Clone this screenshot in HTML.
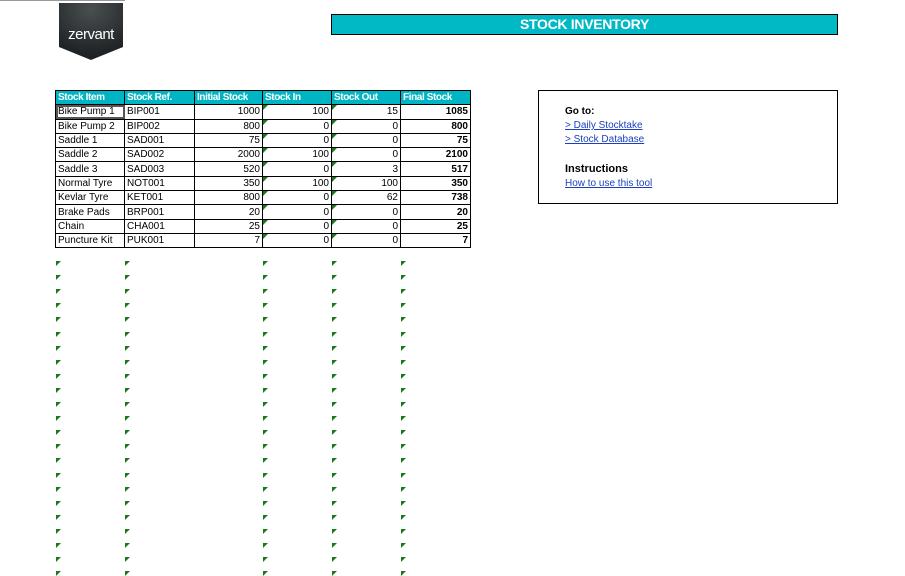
<!DOCTYPE html>
<html><head><style>
body{margin:0;width:905px;height:574px;background:#fff;position:relative;overflow:hidden;font-family:"Liberation Sans",sans-serif;}
.a{position:absolute}
table{position:absolute;left:55px;top:90px;border-collapse:collapse;font-size:10px;table-layout:fixed;width:415px}
td,th{border:1px solid #000;height:13.3px;padding:0 2px;line-height:13px;white-space:nowrap;position:relative;overflow:hidden}
th{background:#00b5c3;color:#fff;text-align:left;font-weight:bold;font-size:10px;letter-spacing:-0.4px}
td.n{text-align:right}
td.b{font-weight:bold}
.t{position:absolute;width:0;height:0;border-top:5px solid #1a7a1a;border-right:5px solid transparent}
td .t{left:0;top:0}
a{color:#1a3fc0;text-decoration:underline}
</style></head><body>
<div class="a" style="left:0;top:0;width:125px;height:1px;background:#999"></div>
<svg class="a" style="left:59px;top:3px" width="65" height="58"><defs><radialGradient id="g" cx="0.5" cy="0.1" r="0.8"><stop offset="0" stop-color="#4a4f52"/><stop offset="1" stop-color="#1f2325"/></radialGradient></defs><path d="M0 0H64V44L32 57L0 44Z" fill="url(#g)"/><text x="32" y="36" fill="#fff" font-size="15" text-anchor="middle" font-family="Liberation Sans" letter-spacing="-0.5">zervant</text></svg>
<div class="a" style="left:331px;top:14px;width:505px;height:19px;background:#00b9c4;border:1px solid #000;color:#fff;font-weight:bold;font-size:14px;text-align:center;line-height:19px;letter-spacing:-0.3px">STOCK INVENTORY</div>
<div class="a" style="left:538px;top:90px;width:298px;height:112px;border:1px solid #000;font-size:10px;line-height:14px">
<div style="position:absolute;left:26px;top:14px"><b>Go to:</b><br><a>&gt; Daily Stocktake</a><br><a>&gt; Stock Database</a><div style="height:15px"></div><b style="font-size:11px">Instructions</b><br><a>How to use this tool</a></div>
</div>
<table>
<colgroup><col style="width:69px"><col style="width:70px"><col style="width:68px"><col style="width:69px"><col style="width:69px"><col style="width:70px"></colgroup>
<tr><th>Stock Item</th><th>Stock Ref.</th><th>Initial Stock</th><th>Stock In</th><th>Stock Out</th><th>Final Stock</th></tr>
<tr><td style="outline:2px solid #555;outline-offset:-2px">Bike Pump 1</td><td>BIP001</td><td class="n">1000</td><td class="n"><i class="t"></i>100</td><td class="n"><i class="t"></i>15</td><td class="n b">1085</td></tr>
<tr><td>Bike Pump 2</td><td>BIP002</td><td class="n">800</td><td class="n"><i class="t"></i>0</td><td class="n"><i class="t"></i>0</td><td class="n b">800</td></tr>
<tr><td>Saddle 1</td><td>SAD001</td><td class="n">75</td><td class="n"><i class="t"></i>0</td><td class="n"><i class="t"></i>0</td><td class="n b">75</td></tr>
<tr><td>Saddle 2</td><td>SAD002</td><td class="n">2000</td><td class="n"><i class="t"></i>100</td><td class="n"><i class="t"></i>0</td><td class="n b">2100</td></tr>
<tr><td>Saddle 3</td><td>SAD003</td><td class="n">520</td><td class="n"><i class="t"></i>0</td><td class="n"><i class="t"></i>3</td><td class="n b">517</td></tr>
<tr><td>Normal Tyre</td><td>NOT001</td><td class="n">350</td><td class="n"><i class="t"></i>100</td><td class="n"><i class="t"></i>100</td><td class="n b">350</td></tr>
<tr><td>Kevlar Tyre</td><td>KET001</td><td class="n">800</td><td class="n"><i class="t"></i>0</td><td class="n"><i class="t"></i>62</td><td class="n b">738</td></tr>
<tr><td>Brake Pads</td><td>BRP001</td><td class="n">20</td><td class="n"><i class="t"></i>0</td><td class="n"><i class="t"></i>0</td><td class="n b">20</td></tr>
<tr><td>Chain</td><td>CHA001</td><td class="n">25</td><td class="n"><i class="t"></i>0</td><td class="n"><i class="t"></i>0</td><td class="n b">25</td></tr>
<tr><td>Puncture Kit</td><td>PUK001</td><td class="n">7</td><td class="n"><i class="t"></i>0</td><td class="n"><i class="t"></i>0</td><td class="n b">7</td></tr>
</table>
<div id="tri"></div>
<script>
var h='',xs=[56,125,263,332,401];
for(var y=261;y<574;y+=14.1){for(var i=0;i<5;i++)h+='<i class="t" style="left:'+xs[i]+'px;top:'+Math.round(y)+'px"></i>';}
document.getElementById('tri').innerHTML=h;
</script>
</body></html>
